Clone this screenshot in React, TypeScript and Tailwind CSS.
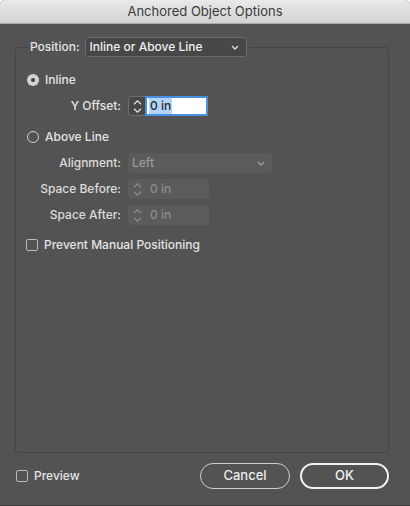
import React from "react";

const font = { fontFamily: "Inter, 'Noto Sans', sans-serif" };

function Chevron({ className = "" }: { className?: string }) {
  return (
    <svg width="8" height="5" viewBox="0 0 8 5" className={className}>
      <path d="M1 1 L4 4 L7 1" fill="none" stroke="currentColor" strokeWidth="1.3" />
    </svg>
  );
}

function Spinner({ disabled }: { disabled?: boolean }) {
  return (
    <div
      className={`w-[18px] h-[20px] flex flex-col items-center justify-center gap-[3px] rounded-l-[3px] ${
        disabled ? "bg-[#5b5b5b] text-[#8c8c8c]" : "bg-[#474747] border border-[#6e6e6e] text-[#e6e6e6]"
      }`}
    >
      <svg width="9" height="5" viewBox="0 0 9 5">
        <path d="M1 4.2 L4.5 0.9 L8 4.2" fill="none" stroke="currentColor" strokeWidth="1.2" />
      </svg>
      <svg width="9" height="5" viewBox="0 0 9 5">
        <path d="M1 0.8 L4.5 4.1 L8 0.8" fill="none" stroke="currentColor" strokeWidth="1.2" />
      </svg>
    </div>
  );
}

function Row({ label, children, disabled }: { label: string; children: React.ReactNode; disabled?: boolean }) {
  return (
    <div className="flex items-center">
      <div className={`w-[101px] text-right pr-[7px] ${disabled ? "text-[#dcdcdc]" : "text-[#e4e4e4]"}`}>{label}</div>
      {children}
    </div>
  );
}

export default function App() {
  return (
    <div
      className="w-[410px] h-[506px] bg-[#535353] flex flex-col rounded-t-[5px] overflow-hidden text-[12px] font-medium text-[#e4e4e4] border-b border-[#3e3e3e]"
      style={font}
    >
      {/* title bar */}
      <div className="h-[24px] shrink-0 bg-gradient-to-b from-[#e9e9e9] to-[#d2d2d2] border-b border-[#a9a9a9] flex items-center justify-center text-[#3a3a3a] text-[13px] font-normal">
        Anchored Object Options
      </div>

      <div className="flex-1 flex flex-col pl-[15px] pr-[21px] pt-[13px]">
        <fieldset className="h-[416px] border border-[#464646] rounded-[3px] pl-[11px] pr-[10px]">
          <legend className="px-[2px] flex items-center">
            <span className="ml-[1px] mr-[5px]">Position:</span>
            <div className="w-[162px] h-[20px] bg-[#474747] border border-[#6a6a6a] rounded-[3px] flex items-center justify-between pl-[4px] pr-[7px] text-[#f0f0f0]">
              <span>Inline or Above Line</span>
              <Chevron className="text-[#e0e0e0]" />
            </div>
          </legend>

          <div className="flex flex-col pt-[15px]">
            {/* Inline radio */}
            <div className="flex items-center h-[16px]">
              <div className="w-[12px] h-[12px] rounded-full bg-[#d2d2d2] flex items-center justify-center">
                <div className="w-[4px] h-[4px] rounded-full bg-[#3c3c3c]" />
              </div>
              <span className="ml-[6px]">Inline</span>
            </div>

            <div className="mt-[8px]">
              <Row label="Y Offset:">
                <Spinner />
                <div className="w-[63px] h-[20px] bg-white border-2 border-[#4a90e2] -ml-[1px] flex items-center px-[2px] rounded-r-[1px]">
                  <span className="bg-[#b3d4fb] text-[#2a2a2a] px-[1px] leading-[16px]">0 in</span>
                </div>
              </Row>
            </div>

            {/* Above Line radio */}
            <div className="flex items-center h-[16px] mt-[13px]">
              <div className="w-[12px] h-[12px] rounded-full border-[1.5px] border-[#cfcfcf]" />
              <span className="ml-[6px]">Above Line</span>
            </div>

            <div className="mt-[8px] flex flex-col gap-[6px]">
              <Row label="Alignment:" disabled>
                <div className="w-[144px] h-[20px] bg-[#5b5b5b] rounded-[3px] flex items-center justify-between pl-[4px] pr-[7px] text-[#9a9a9a]">
                  <span>Left</span>
                  <Chevron className="text-[#a0a0a0]" />
                </div>
              </Row>
              <Row label="Space Before:" disabled>
                <Spinner disabled />
                <div className="w-[63px] h-[20px] bg-[#5b5b5b] flex items-center px-[4px] text-[#8c8c8c] rounded-r-[2px]">0 in</div>
              </Row>
              <Row label="Space After:" disabled>
                <Spinner disabled />
                <div className="w-[63px] h-[20px] bg-[#5b5b5b] flex items-center px-[4px] text-[#8c8c8c] rounded-r-[2px]">0 in</div>
              </Row>
            </div>

            <div className="flex items-center mt-[11px] -ml-[1px]">
              <div className="w-[12px] h-[12px] rounded-[2px] border border-[#b8b8b8]" />
              <span className="ml-[6px]">Prevent Manual Positioning</span>
            </div>
          </div>
        </fieldset>

        {/* bottom bar */}
        <div className="flex items-center mt-[10px]">
          <div className="flex items-center ml-[1px]">
            <div className="w-[12px] h-[12px] rounded-[2px] border border-[#b8b8b8]" />
            <span className="ml-[6px]">Preview</span>
          </div>
          <div className="ml-auto flex gap-[10px]">
            <button className="w-[90px] h-[26px] rounded-full border border-[#cdcdcd] text-[#ececec] text-[13px] font-medium">Cancel</button>
            <button className="w-[89px] h-[26px] rounded-full border-2 border-[#f2f2f2] text-[#f2f2f2] text-[13px] font-medium">OK</button>
          </div>
        </div>
      </div>
    </div>
  );
}
